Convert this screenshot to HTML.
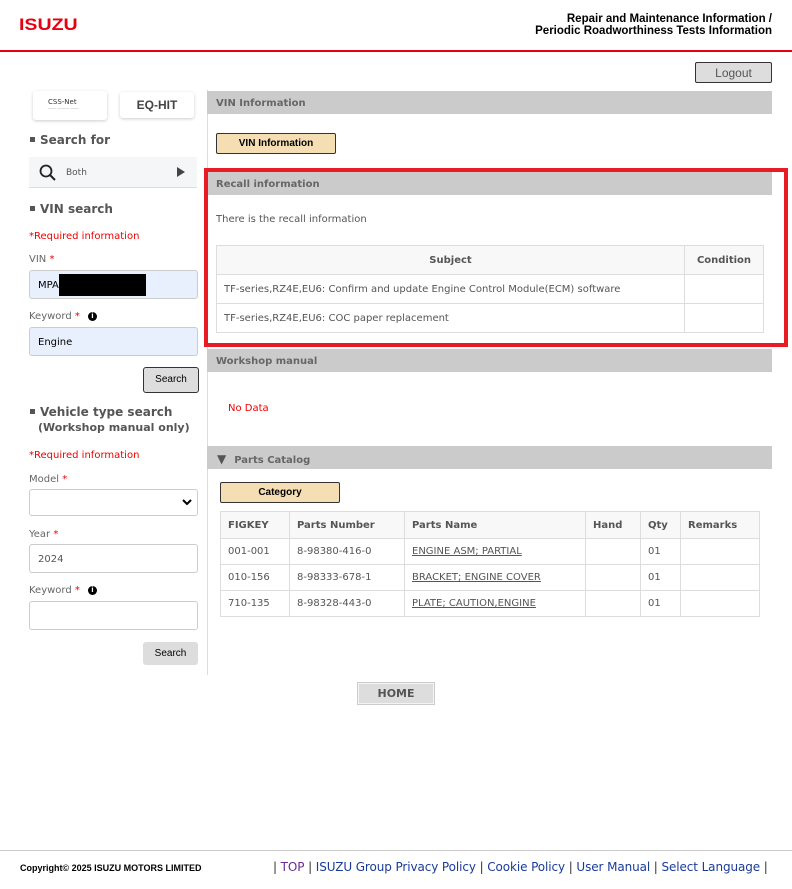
<!DOCTYPE html>
<html><head><meta charset="utf-8"><style>
*{box-sizing:border-box;margin:0;padding:0}
body{width:792px;height:889px;position:relative;background:#fff;font-family:"DejaVu Sans",Verdana,sans-serif;font-size:10px;color:#555;overflow:hidden}
.a{position:absolute}
.hd{position:absolute;left:207px;width:565px;height:23px;background:#cbcbcb;font-weight:bold;color:#666;font-size:10px;padding:7px 9px}
.btn{position:absolute;background:#f5deb3;border:1px solid #333;border-radius:2px;text-align:center;font-family:"Liberation Sans",Arial,sans-serif;font-weight:bold;font-size:10px;color:#000;padding-top:4px}
.lbl{position:absolute;left:29px;font-size:10px;color:#666}
.st{color:#e00}
.in{position:absolute;left:29px;width:169px;height:29px;border:1px solid #ccc;border-radius:3px;font-size:10px;padding:9px 8px;color:#333}
.sec{position:absolute;left:30px;font-weight:bold;font-size:12px;color:#555}
.sec:before{content:"";display:inline-block;width:5px;height:5px;background:#555;margin-right:5px;vertical-align:2px}
.req{position:absolute;left:29px;color:#e00;font-size:10px}
table{border-collapse:collapse;position:absolute}
td,th{border:1px solid #ddd;font-size:10px;color:#555;padding:0 7px;text-align:left}
th{background:#f8f8f8;font-weight:bold}
u{color:#555}
.info{display:inline-block;width:9px;height:9px;border-radius:50%;background:#000;color:#fff;font-size:7px;text-align:center;line-height:9px;font-weight:bold;margin-left:8px;vertical-align:1px}
</style></head><body>
<div class="a" style="left:19px;top:15px;font-family:'Liberation Sans',Arial,sans-serif;font-weight:bold;font-size:17px;color:#e60012;transform:scaleX(1.15);transform-origin:left">ISUZU</div>
<div class="a" style="right:20px;top:13px;text-align:right;font-family:'Liberation Sans',Arial,sans-serif;font-weight:bold;font-size:11.5px;color:#000;line-height:12px">Repair and Maintenance Information /<br>Periodic Roadworthiness Tests Information</div>
<div class="a" style="left:0;top:50px;width:792px;height:2px;background:#e60012"></div>
<div class="a" style="left:695px;top:62px;width:77px;height:21px;background:#ddd;border:1px solid #333;border-radius:2px;text-align:center;font-family:'Liberation Sans',Arial,sans-serif;font-size:12px;color:#555;padding-top:3px">Logout</div>

<div class="a" style="left:33px;top:91px;width:74px;height:29px;border-radius:3px;box-shadow:0 1px 3px #ccc;font-size:7px;color:#333;padding:8px 15px;line-height:6px">CSS-Net<br><span style="font-size:4px;color:#999">—— ——— ——</span></div>
<div class="a" style="left:120px;top:92px;width:74px;height:26px;border-radius:3px;box-shadow:0 1px 3px #ccc;font-family:'Liberation Sans',Arial,sans-serif;font-weight:bold;font-size:12px;color:#444;text-align:center;padding-top:6px">EQ-HIT</div>

<div class="sec" style="top:133px">Search for</div>
<div class="a" style="left:29px;top:157px;width:168px;height:31px;background:#f5f6f7;border-bottom:1px solid #ddd"></div>
<svg class="a" style="left:39px;top:164px" width="18" height="18"><circle cx="7" cy="7" r="5.5" fill="none" stroke="#222" stroke-width="1.8"/><line x1="11" y1="11" x2="16" y2="16" stroke="#222" stroke-width="2"/></svg>
<div class="a" style="left:66px;top:168px;font-size:9px;color:#555">Both</div>
<div class="a" style="left:177px;top:167px;width:0;height:0;border-left:8px solid #444;border-top:5px solid transparent;border-bottom:5px solid transparent"></div>

<div class="sec" style="top:202px">VIN search</div>
<div class="req" style="top:231px">*Required information</div>
<div class="lbl" style="top:254px">VIN <span class="st">*</span></div>
<div class="in" style="top:270px;background:#e8f0fe;color:#000">MPA</div>
<div class="a" style="left:59px;top:274px;width:87px;height:22px;background:#000"></div>
<div class="lbl" style="top:311px">Keyword <span class="st">*</span><span class="info">i</span></div>
<div class="in" style="top:327px;background:#e8f0fe;color:#000">Engine</div>
<div class="a" style="left:143px;top:367px;width:56px;height:26px;background:#ddd;border:1px solid #333;border-radius:3px;font-family:'Liberation Sans',Arial,sans-serif;font-size:10px;color:#000;text-align:center;padding-top:6px">Search</div>

<div class="sec" style="top:405px">Vehicle type search</div>
<div class="a" style="left:38px;top:421px;font-weight:bold;font-size:11px;color:#555">(Workshop manual only)</div>
<div class="req" style="top:450px">*Required information</div>
<div class="lbl" style="top:474px">Model <span class="st">*</span></div>
<div class="in" style="top:489px;height:27px"></div>
<svg class="a" style="left:182px;top:498px" width="10" height="8"><path d="M1 2 L5 6 L9 2" fill="none" stroke="#000" stroke-width="2"/></svg>
<div class="lbl" style="top:529px">Year <span class="st">*</span></div>
<div class="in" style="top:544px;color:#555">2024</div>
<div class="lbl" style="top:585px">Keyword <span class="st">*</span><span class="info">i</span></div>
<div class="in" style="top:601px"></div>
<div class="a" style="left:143px;top:642px;width:55px;height:23px;background:#ddd;border-radius:3px;font-family:'Liberation Sans',Arial,sans-serif;font-size:10px;color:#000;text-align:center;padding-top:6px">Search</div>

<div class="a" style="left:207px;top:90px;width:1px;height:585px;background:#ddd"></div>

<div class="hd" style="top:91px">VIN Information</div>
<div class="btn" style="left:216px;top:133px;width:120px;height:21px">VIN Information</div>
<div class="hd" style="top:172px">Recall information</div>
<div class="a" style="left:216px;top:214px;font-size:10px">There is the recall information</div>
<table style="left:216px;top:245px;width:548px">
<tr style="height:29px"><th style="text-align:center;width:468px">Subject</th><th style="text-align:center">Condition</th></tr>
<tr style="height:29px"><td>TF-series,RZ4E,EU6: Confirm and update Engine Control Module(ECM) software</td><td></td></tr>
<tr style="height:29px"><td>TF-series,RZ4E,EU6: COC paper replacement</td><td></td></tr>
</table>
<div class="a" style="left:204px;top:168px;width:584px;height:179px;border:4px solid #e81c24"></div>

<div class="hd" style="top:349px">Workshop manual</div>
<div class="a" style="left:228px;top:403px;color:#e00">No Data</div>
<div class="hd" style="top:446px;padding-left:10px;padding-top:6px"><span style="font-size:12px;color:#555;margin-right:8px">▼</span>Parts Catalog</div>
<div class="btn" style="left:220px;top:482px;width:120px;height:21px">Category</div>
<table style="left:220px;top:511px;width:540px">
<tr style="height:27px"><th style="width:69px">FIGKEY</th><th style="width:115px">Parts Number</th><th style="width:181px">Parts Name</th><th style="width:55px">Hand</th><th style="width:40px">Qty</th><th>Remarks</th></tr>
<tr style="height:26px"><td>001-001</td><td>8-98380-416-0</td><td><u>ENGINE ASM; PARTIAL</u></td><td></td><td>01</td><td></td></tr>
<tr style="height:26px"><td>010-156</td><td>8-98333-678-1</td><td><u>BRACKET; ENGINE COVER</u></td><td></td><td>01</td><td></td></tr>
<tr style="height:26px"><td>710-135</td><td>8-98328-443-0</td><td><u>PLATE; CAUTION,ENGINE</u></td><td></td><td>01</td><td></td></tr>
</table>

<div class="a" style="left:358px;top:683px;width:76px;height:21px;background:#ddd;border:1px solid #f3f3f3;box-shadow:0 0 0 1px #ccc;text-align:center;font-weight:bold;font-size:11px;color:#555;padding-top:3px">HOME</div>

<div class="a" style="left:0;top:850px;width:792px;height:1px;background:#ccc"></div>
<div class="a" style="left:20px;top:863px;font-family:'Liberation Sans',Arial,sans-serif;font-weight:bold;font-size:9px;color:#000">Copyright© 2025 ISUZU MOTORS LIMITED</div>
<div class="a" style="left:273px;top:860px;font-family:'DejaVu Sans',sans-serif;font-size:12px;color:#1a3b9a;white-space:nowrap;letter-spacing:-0.1px"><span style="color:#333">|</span> <span style="color:#6b2c91">TOP</span> <span style="color:#333">|</span> ISUZU Group Privacy Policy <span style="color:#333">|</span> Cookie Policy <span style="color:#333">|</span> User Manual <span style="color:#333">|</span> Select Language <span style="color:#333">|</span></div>
</body></html>
